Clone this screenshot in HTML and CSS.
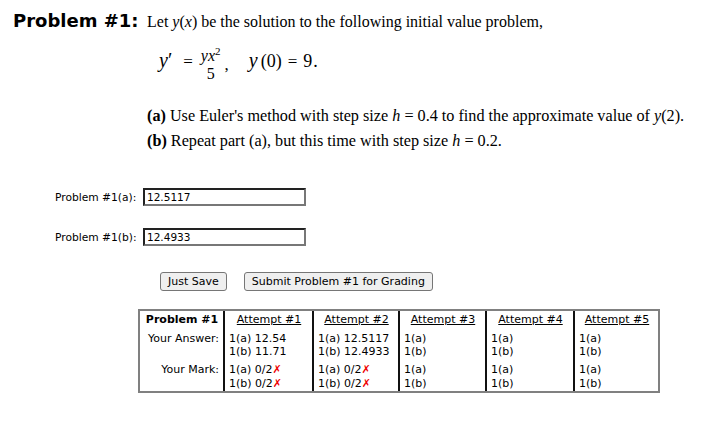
FILE: index.html
```html
<!DOCTYPE html>
<html>
<head>
<meta charset="utf-8">
<link rel="stylesheet" href="styles.css">
</head>
<body>
<div class="page">
  <div class="headline">
    <span class="ptitle">Problem #1:</span>
    <span class="stmt">Let <i>y</i>(<i>x</i>) be the solution to the following initial value problem,</span>
  </div>
  <div class="eq"><span class="yp"><i>y</i>&#8242;</span><span class="op1">=</span><span class="frac"><span class="num"><i>yx</i><sup>2</sup></span><span class="den">5</span></span><span class="comma">,</span><span class="y0"><i>y</i></span><span class="paren">(0)</span><span class="op2">=</span><span class="nine">9.</span></div>
  <div class="parts">
    <div class="part"><b>(a)</b> Use Euler's method with step size <i>h</i> = 0.4 to find the approximate value of <i>y</i>(2).</div>
    <div class="part"><b>(b)</b> Repeat part (a), but this time with step size <i>h</i> = 0.2.</div>
  </div>
  <div class="answers">
    <div class="arow"><span class="alabel">Problem #1(a):</span><input class="ainput" type="text" value="12.5117"></div>
    <div class="arow"><span class="alabel">Problem #1(b):</span><input class="ainput" type="text" value="12.4933"></div>
  </div>
  <div class="buttons">
    <button class="btn">Just Save</button>
    <button class="btn">Submit Problem #1 for Grading</button>
  </div>
  <table class="att">
    <tr class="hdr">
      <th class="c0">Problem #1</th>
      <th class="c1"><u>Attempt #1</u></th>
      <th class="c2"><u>Attempt #2</u></th>
      <th class="c3"><u>Attempt #3</u></th>
      <th class="c4"><u>Attempt #4</u></th>
      <th class="c5"><u>Attempt #5</u></th>
    </tr>
    <tr class="ans">
      <td class="lbl">Your Answer:</td>
      <td>1(a) 12.54<br>1(b) 11.71</td>
      <td>1(a) 12.5117<br>1(b) 12.4933</td>
      <td>1(a)<br>1(b)</td>
      <td>1(a)<br>1(b)</td>
      <td>1(a)<br>1(b)</td>
    </tr>
    <tr class="mark">
      <td class="lbl">Your Mark:</td>
      <td><div class="ml">1(a) 0/2<span class="x">&#10007;</span></div><div class="ml">1(b) 0/2<span class="x">&#10007;</span></div></td>
      <td><div class="ml">1(a) 0/2<span class="x">&#10007;</span></div><div class="ml">1(b) 0/2<span class="x">&#10007;</span></div></td>
      <td><div class="ml">1(a)</div><div class="ml">1(b)</div></td>
      <td><div class="ml">1(a)</div><div class="ml">1(b)</div></td>
      <td><div class="ml">1(a)</div><div class="ml">1(b)</div></td>
    </tr>
  </table>
</div>
</body>
</html>
```
FILE: styles.css
```css
html, body {
  margin: 0;
  padding: 0;
  background: #fff;
  color: #000;
}
.page {
  padding: 10px 0 0 13px;
  font-family: "DejaVu Sans", Verdana, sans-serif;
}
.headline {
  display: flex;
  align-items: baseline;
  height: 22px;
}
.ptitle {
  font-weight: bold;
  font-size: 18px;
  width: 134px;
}
.stmt {
  font-family: "Liberation Serif", serif;
  font-size: 16px;
}
.eq {
  font-family: "Liberation Serif", serif;
  font-size: 17px;
  line-height: 22px;
  height: 36px;
  margin: 15px 0 0 146px;
  white-space: nowrap;
}
.yp {
  font-size: 20px;
}
.op1 {
  margin: 0 8px 0 11px;
}
.frac {
  display: inline-flex;
  flex-direction: column;
  align-items: center;
  vertical-align: 6px;
  font-size: 16px;
}
.frac .num {
  line-height: 18px;
}
.frac .num sup {
  font-size: 11px;
  vertical-align: 6px;
  line-height: 0;
}
.frac .den {
  line-height: 18px;
}
.comma {
  margin: 0 0 0 4px;
  vertical-align: -3px;
}
.y0 {
  font-size: 20px;
  margin-left: 20px;
}
.paren {
  font-size: 18px;
  margin-left: 3px;
}
.op2 {
  margin: 0 6px 0 6px;
}
.nine {
  font-size: 18px;
  letter-spacing: 1px;
}
.parts {
  margin: 24px 0 0 134px;
  font-family: "Liberation Serif", serif;
  font-size: 16.2px;
}
.part {
  height: 25px;
}
.answers {
  display: flex;
  flex-direction: column;
  gap: 22px;
  margin-top: 31px;
  font-size: 10.7px;
}
.arow {
  display: flex;
  align-items: center;
  margin-left: 42px;
  height: 18px;
}
.alabel {
  width: 88px;
}
.ainput {
  box-sizing: border-box;
  width: 163px;
  height: 18px;
  margin: 0;
  padding: 0 2px;
  font-family: "DejaVu Sans", sans-serif;
  font-size: 10.5px;
  border: 2px solid;
  border-color: #222 #777 #777 #222;
  background: #fff;
}
.buttons {
  display: flex;
  gap: 17px;
  margin: 26px 0 0 147px;
}
.btn {
  box-sizing: border-box;
  height: 19px;
  padding: 0 7px;
  font-family: "DejaVu Sans", sans-serif;
  font-size: 11px;
  background: #efefef;
  border: 1px solid #767676;
  border-radius: 3px;
  color: #000;
}
.att {
  box-sizing: border-box;
  margin: 18px 0 0 125px;
  width: 522px;
  table-layout: fixed;
  border: 2px solid #808080;
  border-collapse: separate;
  border-spacing: 0;
  font-size: 11px;
  line-height: 13px;
}
.att th, .att td {
  box-sizing: border-box;
  padding: 0 3px 0 4px;
  vertical-align: top;
  text-align: left;
  border-left: 2px solid #111;
}
.att th:first-child, .att td:first-child {
  border-left: none;
}
.att th {
  font-weight: normal;
  text-align: center;
  padding-top: 2px;
  padding-bottom: 5px;
}
.att th.c0 {
  font-weight: bold;
}
.att .lbl {
  text-align: right;
  padding-right: 4px;
}
.att tr.ans td {
  padding-top: 1px;
  padding-bottom: 5px;
}
.c0 { width: 83px; }
.c1 { width: 89px; }
.c2 { width: 86px; }
.c3 { width: 87px; }
.c4 { width: 88px; }
.c5 { width: 85px; }
.ml {
  height: 14px;
}
.x {
  color: #e00;
  font-weight: bold;
}
```
